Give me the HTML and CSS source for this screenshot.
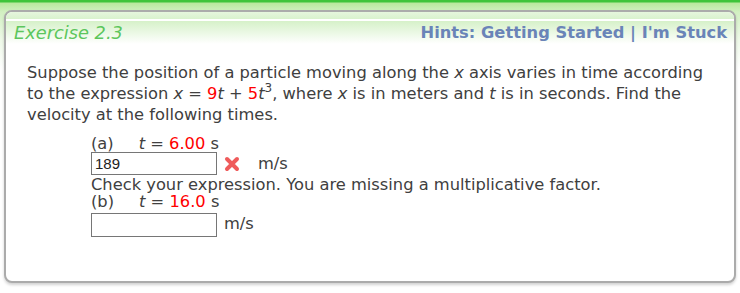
FILE: index.html
```html
<!DOCTYPE html>
<html lang="en">
<head>
  <meta charset="UTF-8" />
  <title>Exercise 2.3</title>
  <link rel="stylesheet" href="styles.css">
</head>
<body>
  <div class="panel">
    <div class="panel-top"></div>
    <div class="header">
      <span class="ex-title">Exercise 2.3</span>
      <span class="hints">Hints: Getting Started | I'm Stuck</span>
    </div>
    <div class="content">
      <p class="question">
        Suppose the position of a particle moving along the <i>x</i> axis varies in time according
        to the expression <i>x</i> = <span class="red">9</span><i>t</i> + <span class="red">5</span><i>t</i><sup>3</sup>, where <i>x</i> is in meters and <i>t</i> is in seconds. Find the
        velocity at the following times.
      </p>
      <div class="part">
        <div class="label">(a)<span class="given"><i>t</i> = <span class="red">6.00</span> s</span></div>
        <div class="answer">
          <input type="text" value="189" />
          <svg class="wrong" width="18" height="16" viewBox="0 0 18 16"><path d="M4 3 L14 13 M14 3 L4 13" stroke="#ef5b5b" stroke-width="4" stroke-linecap="round"/></svg>
          <span class="unit wide">m/s</span>
        </div>
        <div class="feedback">Check your expression. You are missing a multiplicative factor.</div>
      </div>
      <div class="part second">
        <div class="label">(b)<span class="given"><i>t</i> = <span class="red">16.0</span> s</span></div>
        <div class="answer">
          <input type="text" value="" class="tall" />
          <span class="unit">m/s</span>
        </div>
      </div>
    </div>
  </div>
</body>
</html>
```

FILE: styles.css
```css
body {
  margin: 0;
  background: linear-gradient(180deg, #3fc43a 0, #3fc43a 2px, #b9e89c 3px, #d2f0c2 12px, #eef9e8 40px, #ffffff 70px);
  font-family: 'DejaVu Sans', Verdana, sans-serif;
  height: 293px;
  overflow: hidden;
}
.panel {
  margin: 10px 4px 0 4px;
  height: 273px;
  box-sizing: border-box;
  border: 2px solid #ababab;
  border-radius: 8px;
  background: #fff;
  box-shadow: 0 2px 3px rgba(0,0,0,0.18);
}
.panel-top {
  height: 7px;
  border-radius: 6px 6px 0 0;
  background: linear-gradient(180deg, #e6f6de, #d9f2cd);
}
.header {
  margin-top: 2px;
  height: 23px;
  display: flex;
  justify-content: space-between;
  align-items: center;
  padding: 0 7px 0 8px;
  background: linear-gradient(180deg, #d6f1c9, #ffffff);
}
.ex-title {
  color: #5cc65c;
  font-style: italic;
  font-size: 17.8px;
}
.hints {
  color: #6a84b8;
  font-weight: bold;
  font-size: 16.3px;
}
.content {
  padding: 18px 0 0 21px;
  color: #404040;
  font-size: 16.3px;
  line-height: 21px;
}
.question {
  margin: 0;
  width: 685px;
}
.red {
  color: #f00;
}
sup {
  font-size: 12px;
  line-height: 0;
  vertical-align: 7px;
}
.part {
  margin-left: 64px;
}
.question + .part {
  margin-top: 11px;
}
.label {
  line-height: 16px;
}
.given {
  margin-left: 25px;
}
.answer {
  display: flex;
  align-items: center;
}
input {
  width: 126px;
  height: 23px;
  box-sizing: border-box;
  border: 1px solid #767676;
  padding: 0 3px;
  font-family: 'Liberation Sans', Arial, sans-serif;
  font-size: 15px;
  color: #222;
  margin: 0;
}
input.tall {
  height: 24px;
  margin-top: 3px;
}
.wrong {
  margin-left: 6px;
}
.unit {
  margin-left: 7px;
}
.unit.wide {
  margin-left: 17px;
}
.feedback {
  line-height: 19px;
}
```
